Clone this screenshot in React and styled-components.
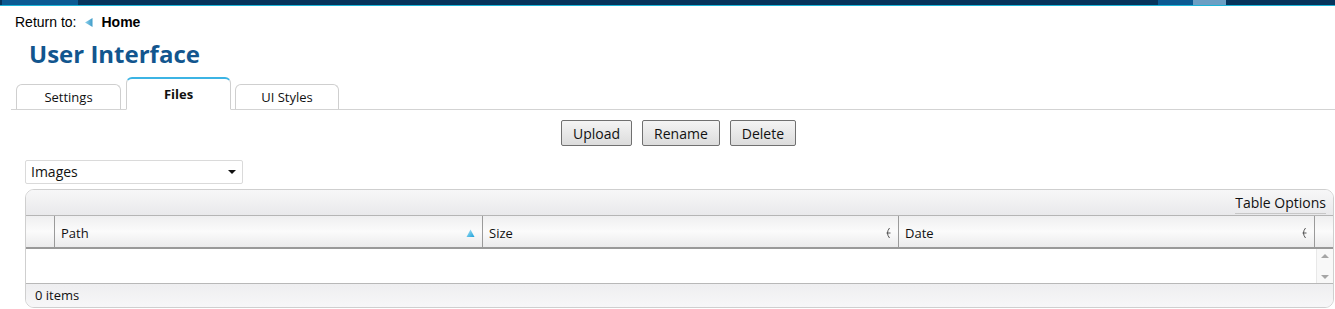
import React, { useState } from 'react';
import styled, { createGlobalStyle } from 'styled-components';

const GlobalStyle = createGlobalStyle`
    html, body {
        margin: 0;
        padding: 0;
        background: #fff;
        font-family: "Open Sans", "Liberation Sans", sans-serif;
        font-size: 13px;
        color: #111;
    }
`;

const TopBar = styled.div`
    height: 5px;
    background: #06345c;
    border-bottom: 1px solid #1cb4d8;
    display: flex;
`;

const BarPiece = styled.div`
    width: ${props => props.w}px;
    background: ${props => props.color};
`;

const ReturnRow = styled.div`
    display: flex;
    align-items: center;
    height: 32px;
    padding-left: 15px;
    font-family: "Liberation Sans", Arial, sans-serif;
    font-size: 14px;
    color: #000;
`;

const HomeLink = styled.a`
    display: inline-flex;
    align-items: center;
    margin-left: 9px;
    font-weight: bold;
    color: #000;
    text-decoration: none;
    gap: 8px;
`;

const Title = styled.h1`
    margin: 0;
    padding-left: 29px;
    height: 37px;
    line-height: 32px;
    font-size: 24px;
    font-weight: 700;
    color: #12568e;
    letter-spacing: 0;
`;

const TabStrip = styled.div`
    display: flex;
    align-items: flex-end;
    margin-left: 11px;
    padding-left: 5px;
    gap: 5px;
    border-bottom: 1px solid #d3d3d3;
    height: 35px;
    box-sizing: border-box;
`;

const Tab = styled.div`
    width: ${props => props.narrow ? 104 : 105}px;
    height: ${props => props.active ? 33 : 25}px;
    box-sizing: border-box;
    border: 1px solid #cfcfcf;
    border-top: ${props => props.active ? '2px solid #3cb4e4' : '1px solid #cfcfcf'};
    border-bottom: ${props => props.active ? '1px solid #fff' : 'none'};
    margin-bottom: ${props => props.active ? '-1px' : '0'};
    margin-left: ${props => props.narrow ? '-1px' : '0'};
    border-radius: 6px 6px 0 0;
    background: #fff;
    display: flex;
    justify-content: center;
    padding-top: ${props => props.active ? '6px' : '3px'};
    font-weight: ${props => props.active ? 700 : 400};
    font-size: 13px;
    color: #111;
    cursor: pointer;
`;

const ButtonRow = styled.div`
    display: flex;
    justify-content: center;
    gap: 10px;
    padding: 10px 0 0 22px;
    height: 50px;
    box-sizing: border-box;
`;

const Button = styled.button`
    height: 26px;
    padding: 0 11px;
    font-family: "Open Sans", "Liberation Sans", sans-serif;
    font-size: 14px;
    color: #111;
    border: 1px solid #707070;
    border-radius: 2px;
    background: linear-gradient(#f4f4f4, #dcdcdc);
    cursor: pointer;
`;

const Content = styled.div`
    padding: 0 1px 0 25px;
`;

const Select = styled.div`
    width: 218px;
    height: 24px;
    box-sizing: border-box;
    border: 1px solid #dadada;
    border-radius: 2px;
    display: flex;
    align-items: center;
    justify-content: space-between;
    padding: 0 6px 1px 5px;
    font-size: 14px;
    color: #111;
`;

const Caret = styled.span`
    width: 0;
    height: 0;
    border-left: 4px solid transparent;
    border-right: 4px solid transparent;
    border-top: 4px solid #111;
`;

const Panel = styled.div`
    margin-top: 5px;
    border: 1px solid #cfcfcf;
    border-radius: 9px;
    overflow: hidden;
`;

const Toolbar = styled.div`
    height: 25px;
    background: linear-gradient(#f7f7f8, #e9e9eb);
    display: flex;
    justify-content: flex-end;
    align-items: flex-end;
    padding-right: 7px;
    border-bottom: 1px solid #b5b5b5;
`;

const OptionsLink = styled.span`
    font-size: 14px;
    color: #111;
    padding-bottom: 1px;
    border-bottom: 1px solid #c7c7c7;
    margin-bottom: 1px;
`;

const HeaderRow = styled.div`
    display: grid;
    grid-template-columns: 29px 428px 416px 416px 1fr;
    height: 31px;
    border-bottom: 2px solid #999;
    background: linear-gradient(#efeff0, #fbfbfb 50%, #ebebec);
`;

const HeaderCell = styled.div`
    display: flex;
    align-items: center;
    justify-content: space-between;
    padding: 3px 7px 0 6px;
    border-right: ${props => props.last ? 'none' : '1px solid #9a9a9a'};
    font-size: 13px;
    color: #111;
`;

const Body = styled.div`
    display: flex;
    justify-content: flex-end;
    height: 34px;
    border-bottom: 1px solid #b8b8b8;
`;

const ScrollBar = styled.div`
    width: 17px;
    border-left: 1px solid #e8e8e8;
    background: #f8f8f8;
    display: flex;
    flex-direction: column;
    justify-content: space-between;
    align-items: center;
    padding: 5px 0 4px;
    box-sizing: border-box;
`;

const Arrow = styled.span`
    width: 0;
    height: 0;
    border-left: 4px solid transparent;
    border-right: 4px solid transparent;
    border-${props => props.up ? 'bottom' : 'top'}: 4px solid #a5a5a5;
`;

const Footer = styled.div`
    height: 22px;
    background: linear-gradient(#eeeef0, #f7f7f8);
    display: flex;
    align-items: center;
    padding: 0 0 1px 9px;
    font-size: 13px;
    color: #111;
`;

const SortUp = () => (
    <svg width="9" height="9" viewBox="0 0 9 9">
        <defs>
            <linearGradient id="su" x1="0" y1="0" x2="1" y2="1">
                <stop offset="0" stopColor="#aee6f8" />
                <stop offset="1" stopColor="#1a9fd8" />
            </linearGradient>
        </defs>
        <polygon points="4.5,0.5 8.5,8 0.5,8" fill="url(#su)" />
    </svg>
);

const Unsorted = () => (
    <svg width="7" height="12" viewBox="0 0 7 12">
        <path d="M5.5 1 Q1.5 6 5.5 11" fill="none" stroke="#555" strokeWidth="1" />
        <path d="M2.5 6 H6.5" stroke="#555" strokeWidth="1" />
    </svg>
);

const HomeArrow = () => (
    <svg width="8" height="9" viewBox="0 0 8 9">
        <defs>
            <linearGradient id="ha" x1="0" y1="0" x2="1" y2="0">
                <stop offset="0" stopColor="#8fd3ee" />
                <stop offset="1" stopColor="#3f9cc8" />
            </linearGradient>
        </defs>
        <polygon points="0,4.5 7.5,0 7.5,9" fill="url(#ha)" />
    </svg>
);

const tabs = ['Settings', 'Files', 'UI Styles'];

const App = () => {
    const [active, setActive] = useState('Files');

    return (
        <>
            <GlobalStyle />
            <TopBar>
                <BarPiece w={2} color="#06345c" />
                <BarPiece w={76} color="#0b5a93" />
                <BarPiece w={1080} color="#06345c" />
                <BarPiece w={35} color="#0b5a93" />
                <BarPiece w={33} color="#6b9fc4" />
            </TopBar>
            <ReturnRow>
                Return to:
                <HomeLink href="#"><HomeArrow />Home</HomeLink>
            </ReturnRow>
            <Title>User Interface</Title>
            <TabStrip>
                {tabs.map((t, i) =>
                    <Tab key={t} active={t === active} narrow={i === 2} onClick={() => setActive(t)}>{t}</Tab>
                )}
            </TabStrip>
            <ButtonRow>
                <Button>Upload</Button>
                <Button>Rename</Button>
                <Button>Delete</Button>
            </ButtonRow>
            <Content>
                <Select>Images<Caret /></Select>
                <Panel>
                    <Toolbar><OptionsLink>Table Options</OptionsLink></Toolbar>
                    <HeaderRow>
                        <HeaderCell />
                        <HeaderCell>Path<SortUp /></HeaderCell>
                        <HeaderCell>Size<Unsorted /></HeaderCell>
                        <HeaderCell>Date<Unsorted /></HeaderCell>
                        <HeaderCell last />
                    </HeaderRow>
                    <Body>
                        <ScrollBar><Arrow up /><Arrow /></ScrollBar>
                    </Body>
                    <Footer>0 items</Footer>
                </Panel>
            </Content>
        </>
    );
};

export default App;
